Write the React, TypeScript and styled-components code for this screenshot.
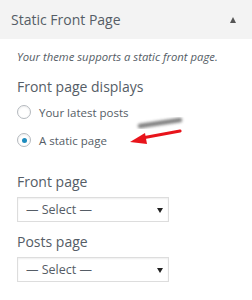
import { useState } from "react";
import styled, { createGlobalStyle } from "styled-components";

const GlobalStyle = createGlobalStyle`
  html, body {
    margin: 0;
    padding: 0;
    background: #fff;
  }
  body {
    font-family: "Open Sans", "Liberation Sans", sans-serif;
    color: #555d66;
  }
`;

const Panel = styled.div`
  position: relative;
  width: 252px;
  height: 300px;
  overflow: hidden;
`;

const Header = styled.div`
  display: flex;
  align-items: center;
  justify-content: space-between;
  height: 39px;
  padding: 0 11px;
  background: #f3f3f3;
  font-size: 14px;
  color: #555d66;
`;

const Caret = styled.span`
  width: 0;
  height: 0;
  margin-right: 5px;
  border-left: 3.5px solid transparent;
  border-right: 3.5px solid transparent;
  border-bottom: 6px solid #555;
`;

const Body = styled.div`
  display: flex;
  flex-direction: column;
  padding: 10px 17px 0;
`;

const Note = styled.p`
  margin: 0;
  font-size: 11.3px;
  line-height: 16px;
  font-style: italic;
  color: #555d66;
`;

const Label = styled.div<{ gap: number }>`
  margin-top: ${({ gap }) => gap}px;
  font-size: 14px;
  line-height: 20px;
  color: #555d66;
`;

const RadioList = styled.div`
  margin-top: 1px;
`;

const RadioRow = styled.label`
  display: flex;
  align-items: center;
  gap: 8px;
  height: 28px;
  font-size: 11.5px;
  color: #555d66;
  cursor: pointer;
`;

const Radio = styled.span<{ checked: boolean }>`
  box-sizing: border-box;
  display: flex;
  align-items: center;
  justify-content: center;
  width: 14px;
  height: 14px;
  border: 1px solid #b4b9be;
  border-radius: 50%;
  background: #fff;
  box-shadow: inset 0 1px 2px rgba(0, 0, 0, 0.07);

  &::after {
    content: "";
    display: ${({ checked }) => (checked ? "block" : "none")};
    width: 5px;
    height: 5px;
    border-radius: 50%;
    background: #1e8cbe;
  }
`;

const SelectWrap = styled.div`
  position: relative;
  margin-top: 5px;
  width: 152px;
  height: 25px;
`;

const Select = styled.select`
  box-sizing: border-box;
  width: 100%;
  height: 100%;
  appearance: none;
  margin: 0;
  padding: 0 0 0 8px;
  border: 1px solid #ddd;
  border-radius: 0;
  background: #fff;
  box-shadow: inset 0 1px 2px rgba(0, 0, 0, 0.07);
  font-family: "Open Sans", "Liberation Sans", sans-serif;
  font-size: 12.5px;
  color: #555d66;
  outline: none;
`;

const SelectArrow = styled.span`
  position: absolute;
  right: 6px;
  top: 11px;
  width: 0;
  height: 0;
  border-left: 3.5px solid transparent;
  border-right: 3.5px solid transparent;
  border-top: 5px solid #222;
  pointer-events: none;
`;

const Pointer = styled.svg`
  position: absolute;
  left: 126px;
  top: 116px;
  pointer-events: none;
`;

const choices = ["Your latest posts", "A static page"];

export default function App() {
  const [picked, setPicked] = useState(1);

  return (
    <>
      <GlobalStyle />
      <Panel>
        <Header>
          Static Front Page
          <Caret />
        </Header>
        <Body>
          <Note>Your theme supports a static front page.</Note>
          <Label gap={12}>Front page displays</Label>
          <RadioList>
            {choices.map((c, i) => (
              <RadioRow key={c} onClick={() => setPicked(i)}>
                <Radio checked={picked === i} />
                {c}
              </RadioRow>
            ))}
          </RadioList>
          <Label gap={18}>Front page</Label>
          <SelectWrap>
            <Select defaultValue="">
              <option value="">— Select —</option>
            </Select>
            <SelectArrow />
          </SelectWrap>
          <Label gap={10}>Posts page</Label>
          <SelectWrap>
            <Select defaultValue="">
              <option value="">— Select —</option>
            </Select>
            <SelectArrow />
          </SelectWrap>
        </Body>
        <Pointer width="62" height="34" viewBox="0 0 62 34">
          <defs>
            <filter id="blur" x="-20%" y="-50%" width="140%" height="200%">
              <feGaussianBlur stdDeviation="1.6" />
            </filter>
          </defs>
          <path d="M14 10 L54 4" stroke="#666" strokeWidth="4.5" strokeLinecap="round" filter="url(#blur)" opacity="0.85" />
          <path d="M16 22 L54 15" stroke="#e8141b" strokeWidth="3.2" strokeLinecap="round" />
          <path d="M4 26 L19 17 L21 28 Z" fill="#e8141b" />
        </Pointer>
      </Panel>
    </>
  );
}
